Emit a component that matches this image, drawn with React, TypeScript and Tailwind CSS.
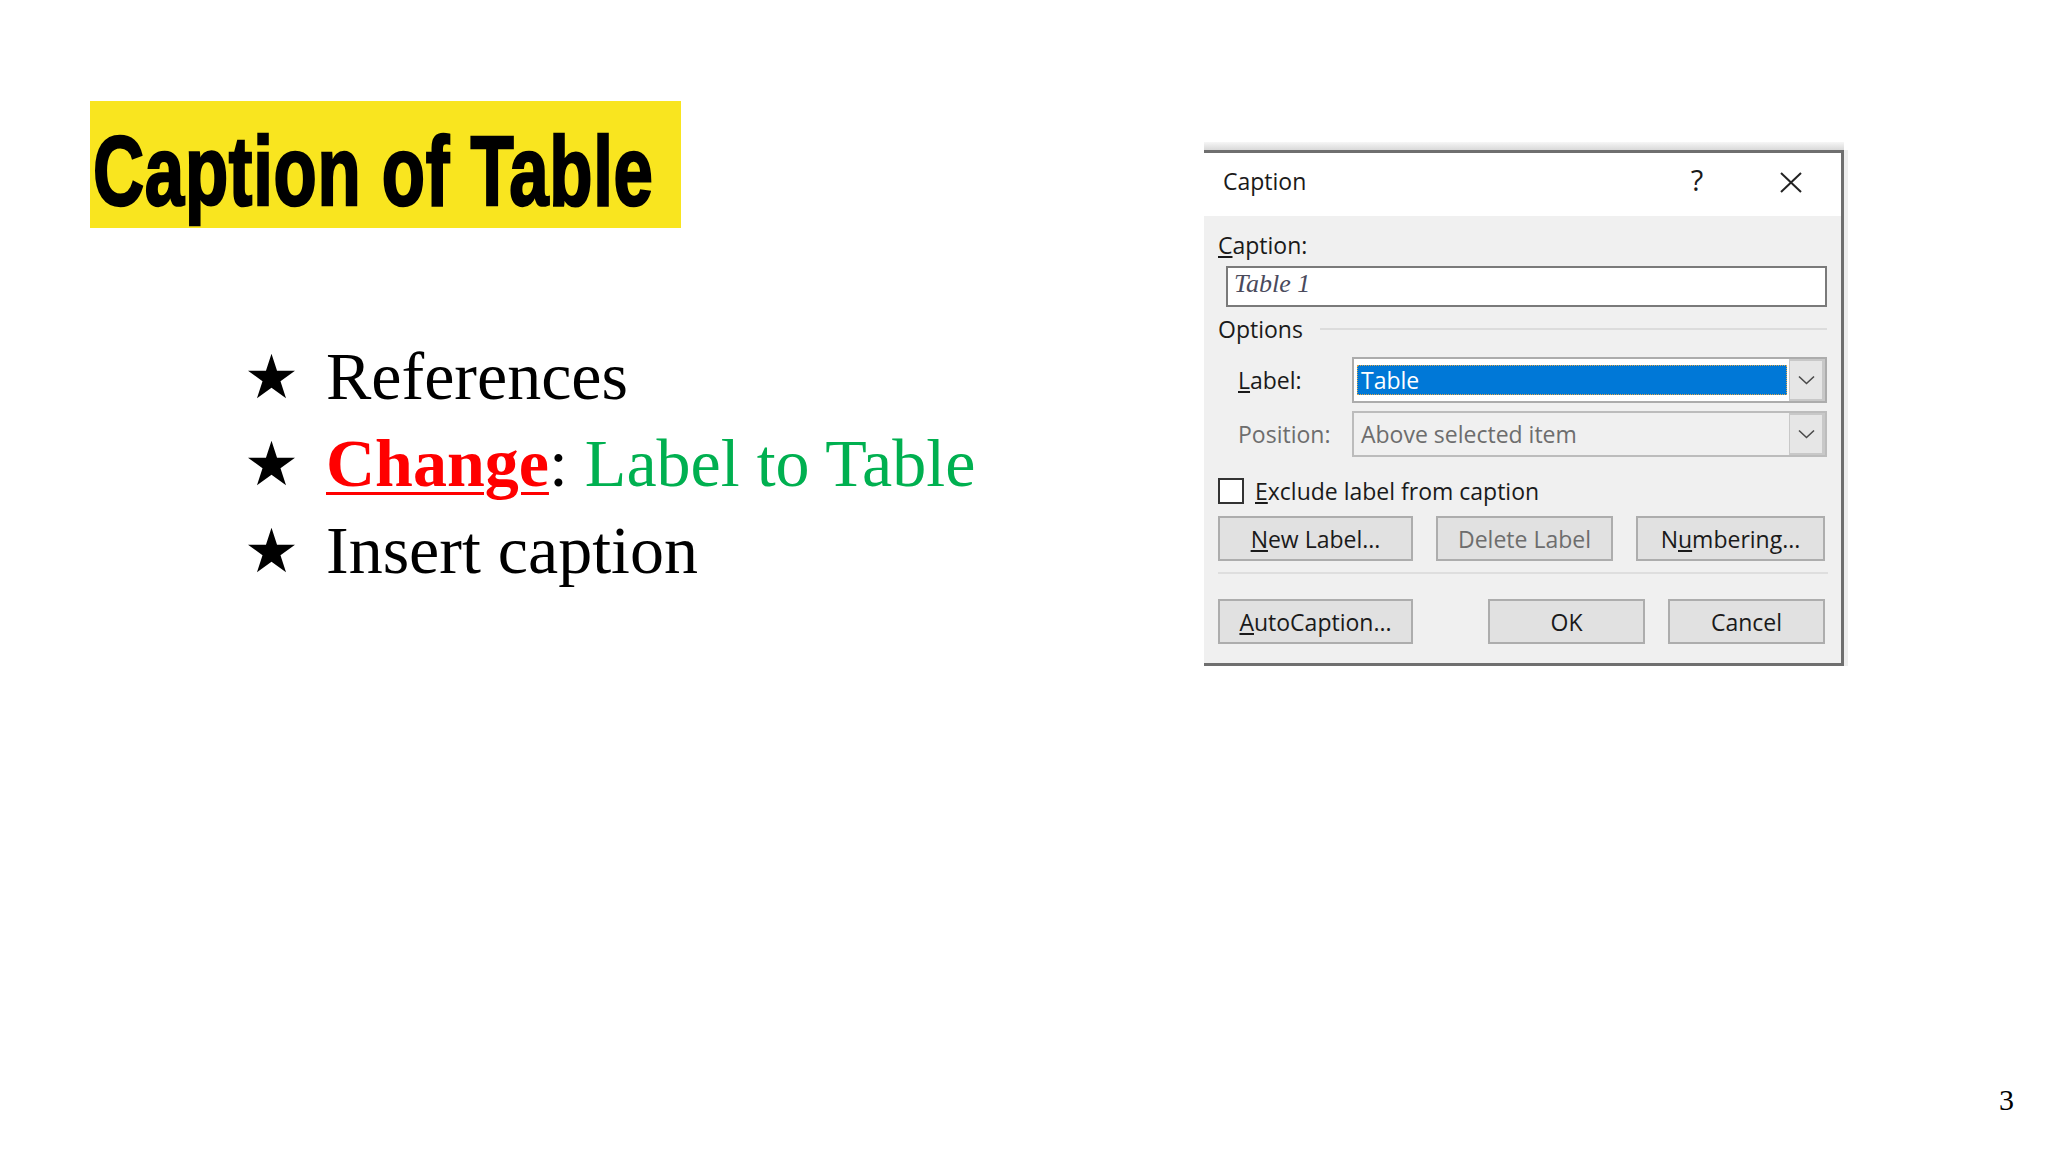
import React from "react";

const Star = () => (
  <svg
    viewBox="0 0 100 95.1"
    className="inline-block w-[47px] h-[46px] mr-[31px] align-baseline"
    fill="#000"
  >
    <polygon points="50,0 61.8,36.3 100,36.3 69.1,58.8 80.9,95.1 50,72.7 19.1,95.1 30.9,58.8 0,36.3 38.2,36.3" />
  </svg>
);

const Chevron = () => (
  <svg width="17" height="10" viewBox="0 0 17 10">
    <polyline points="1,1.5 8.5,8.5 16,1.5" fill="none" stroke="#4a4a4a" strokeWidth="1.6" />
  </svg>
);

const DropButton = () => (
  <div className="w-[36px] h-full bg-[#c8c8c8] pt-[2px] pb-[2px] pr-[3px] pl-[1px]">
    <div className="w-full h-full bg-[#e6e6e6] flex items-center justify-center">
      <Chevron />
    </div>
  </div>
);

const Btn = ({ w, disabled, children }: { w: string; disabled?: boolean; children: React.ReactNode }) => (
  <div
    className={`${w} h-[45px] border-2 border-[#adadad] bg-[#e1e1e1] flex items-center justify-center leading-[30px] ${
      disabled ? "text-[#6d6d6d]" : "text-[#1a1a1a]"
    }`}
  >
    {children}
  </div>
);

const Dialog = () => (
  <div className="w-[644px] font-['Open_Sans','Noto_Sans',sans-serif] text-[23px] text-[#1a1a1a]">
    <div className="h-[8px] mr-[4px] bg-gradient-to-b from-[#f6f6f6] to-[#d9d9d9]" />
    <div className="flex">
      <div className="w-[640px] border-t-[3px] border-r-[3px] border-b-[3px] border-[#6f6f6f] bg-[#f0f0f0]">
        {/* title bar */}
        <div className="h-[63px] bg-white flex items-start pl-[19px] pt-[13px] leading-[30px]">
          <span>Caption</span>
          <span className="ml-auto w-[40px] text-center text-[29px] leading-[30px] -mt-[1px]">?</span>
          <svg width="22" height="21" viewBox="0 0 22 21" className="ml-[63px] mr-[39px] mt-[6px]">
            <line x1="1" y1="1" x2="21" y2="20" stroke="#222" strokeWidth="2" />
            <line x1="21" y1="1" x2="1" y2="20" stroke="#222" strokeWidth="2" />
          </svg>
        </div>
        {/* body */}
        <div className="h-[447px] pl-[14px] pr-[14px] flex flex-col">
          <div className="mt-[14px] h-[30px] leading-[30px]">
            <span className="underline">C</span>aption:
          </div>
          <div className="mt-[6px] ml-[8px] h-[41px] border-2 border-[#7a7a7a] bg-white pl-[6px]">
            <div className="font-['Liberation_Serif',serif] italic text-[26px] leading-[31px] text-[#4a4a5c]">
              Table 1
            </div>
          </div>
          <div className="mt-[7px] h-[30px] flex items-center leading-[30px]">
            <span>Options</span>
            <div className="flex-1 h-[2px] bg-[#dcdcdc] ml-[17px]" />
          </div>
          <div className="mt-[13px] h-[46px] flex items-center leading-[30px]">
            <div className="w-[134px] pl-[20px]">
              <span className="underline">L</span>abel:
            </div>
            <div className="flex h-[46px] w-[475px] border-2 border-[#acacac] bg-white">
              <div className="flex-1 pl-[3px] pr-[2px] pt-[6px] pb-[6px]">
                <div className="h-full bg-[#0078d7] border border-dotted border-[#d9a64e] flex items-center pl-[3px] text-white">
                  Table
                </div>
              </div>
              <DropButton />
            </div>
          </div>
          <div className="mt-[8px] h-[46px] flex items-center leading-[30px] text-[#6d6d6d]">
            <div className="w-[134px] pl-[20px]">Position:</div>
            <div className="flex h-[46px] w-[475px] border-2 border-[#bcbcbc] bg-[#f0f0f0]">
              <div className="flex-1 flex items-center pl-[7px]">Above selected item</div>
              <DropButton />
            </div>
          </div>
          <div className="mt-[20px] h-[27px] flex items-center leading-[30px]">
            <div className="w-[26px] h-[26px] border-2 border-[#333] bg-white" />
            <span className="ml-[11px]">
              <span className="underline">E</span>xclude label from caption
            </span>
          </div>
          <div className="mt-[12px] flex">
            <Btn w="w-[195px]">
              <span>
                <span className="underline">N</span>ew Label...
              </span>
            </Btn>
            <div className="ml-[23px]">
              <Btn w="w-[177px]" disabled>
                Delete Label
              </Btn>
            </div>
            <div className="ml-[23px]">
              <Btn w="w-[189px]">
                <span>
                  N<span className="underline">u</span>mbering...
                </span>
              </Btn>
            </div>
          </div>
          <div className="mt-[11px] h-[2px] w-[610px] bg-[#dedede]" />
          <div className="mt-[25px] flex">
            <Btn w="w-[195px]">
              <span>
                <span className="underline">A</span>utoCaption...
              </span>
            </Btn>
            <div className="ml-[75px]">
              <Btn w="w-[157px]">OK</Btn>
            </div>
            <div className="ml-[23px]">
              <Btn w="w-[157px]">Cancel</Btn>
            </div>
          </div>
        </div>
      </div>
      <div className="w-[4px] bg-[#eeeeee]" />
    </div>
  </div>
);

export default function App() {
  return (
    <div className="w-[2048px] h-[1152px] bg-white flex flex-col overflow-hidden">
      <div className="flex flex-1">
        <div className="w-[1204px] pl-[90px] pt-[101px]">
          <div className="w-[591px] h-[127px] bg-[#f9e51f] pl-[3px] pt-[20px]">
            <div className="font-['Liberation_Sans',sans-serif] font-bold text-[99px] leading-none text-black whitespace-nowrap origin-left [transform:scaleX(0.715)] [-webkit-text-stroke:2.5px_#000] tracking-[1px]">
              Caption of Table
            </div>
          </div>
          <div className="mt-[105px] pl-[158px] font-['Liberation_Serif',serif] text-[68px] leading-[87px] text-black whitespace-nowrap">
            <div className="h-[87px]">
              <Star />
              References
            </div>
            <div className="h-[87px]">
              <Star />
              <span className="font-bold text-[#ff0000] underline decoration-[3px] underline-offset-[6px]">Change</span>
              <span>: </span>
              <span className="text-[#00b050]">Label to Table</span>
            </div>
            <div className="h-[87px]">
              <Star />
              Insert caption
            </div>
          </div>
        </div>
        <div className="pt-[142px]">
          <Dialog />
        </div>
      </div>
      <div className="flex justify-end pr-[34px] pb-[37px] font-['Liberation_Serif',serif] text-[30px] leading-none text-black">
        3
      </div>
    </div>
  );
}
